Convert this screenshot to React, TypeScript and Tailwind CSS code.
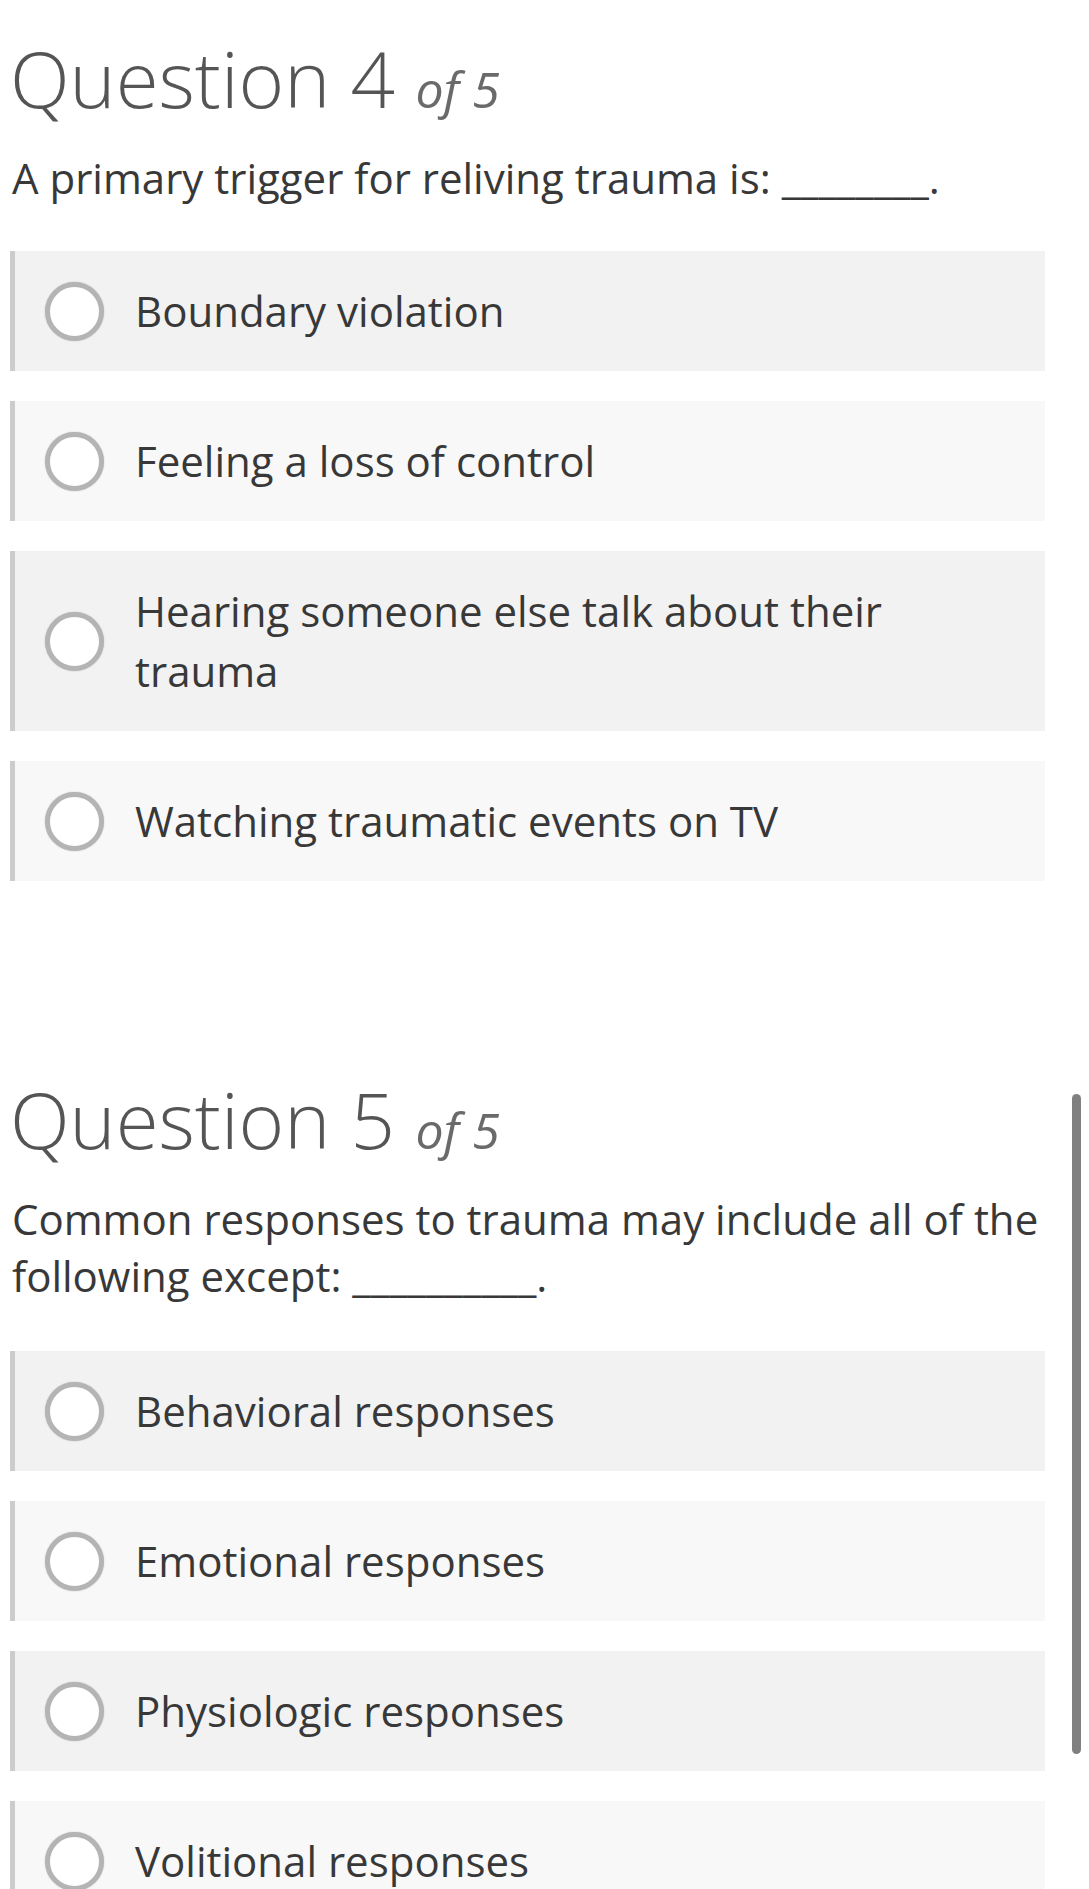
import React from "react";

type Q = { num: number; text: React.ReactNode; options: string[] };

const questions: Q[] = [
  {
    num: 4,
    text: "A primary trigger for reliving trauma is: ________.",
    options: [
      "Boundary violation",
      "Feeling a loss of control",
      "Hearing someone else talk about their trauma",
      "Watching traumatic events on TV",
    ],
  },
  {
    num: 5,
    text: "Common responses to trauma may include all of the following except: __________.",
    options: [
      "Behavioral responses",
      "Emotional responses",
      "Physiologic responses",
      "Volitional responses",
    ],
  },
];

function Option({ label, idx }: { label: string; idx: number }) {
  return (
    <div
      className={`flex items-center border-l-[5px] border-[#cccccc] py-[30px] pr-[60px] ${
        idx % 2 === 0 ? "bg-[#f2f2f2]" : "bg-[#f8f8f8]"
      }`}
    >
      <div className="ml-[30px] mr-[31px] h-[59px] w-[59px] shrink-0 rounded-full border-[5px] border-[#b4b4b4] bg-white shadow-[0_0_1.5px_rgba(0,0,0,0.25)]" />
      <div className="text-[42px] leading-[60px] text-[#383838]">{label}</div>
    </div>
  );
}

function Question({ q, last }: { q: Q; last: boolean }) {
  return (
    <section className={last ? "" : "mb-[160px]"}>
      <h2 className="pt-[32px] text-[78px] font-light leading-[92px] text-[#555555]">
        Question {q.num}{" "}
        <span className="text-[50px] font-normal italic leading-none text-[#6a6a6a]">of 5</span>
      </h2>
      <p className="mr-[-40px] mt-[25px] pl-[2px] text-[42px] leading-[57px] text-[#383838]">{q.text}</p>
      <div className={`flex flex-col gap-[30px] ${last ? "mt-[47px]" : "mt-[45px]"}`}>
        {q.options.map((o, i) => (
          <Option key={o} label={o} idx={i} />
        ))}
      </div>
    </section>
  );
}

export default function App() {
  return (
    <div
      className="relative h-[1889px] w-[1089px] overflow-hidden bg-white"
      style={{ fontFamily: '"Open Sans", "Noto Sans", sans-serif' }}
    >
      <div className="w-[1045px] pl-[10px]">
        {questions.map((q, i) => (
          <Question key={q.num} q={q} last={i === questions.length - 1} />
        ))}
      </div>
      <div className="absolute left-[1072px] top-[1094px] h-[660px] w-[9px] rounded-full bg-[#808080]" />
    </div>
  );
}
